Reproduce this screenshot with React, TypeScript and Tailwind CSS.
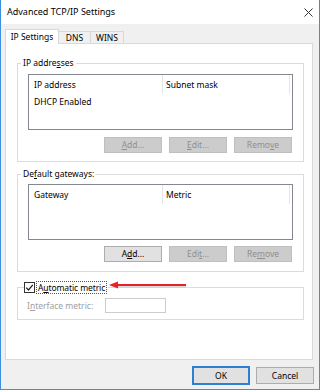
const disabledBtn =
  "flex h-[16px] w-[58px] items-center justify-center border border-[#bfbfbf] bg-[#cccccc] text-[#8f8f8f]";
const enabledBtn =
  "flex h-[16px] w-[58px] items-center justify-center border border-[#adadad] bg-[#e1e1e1] text-black";

function Key({ children }: { children: string }) {
  return <span className="underline underline-offset-[1px]">{children}</span>;
}

function ListBox({ first, second, rows }: { first: string; second: string; rows: string[] }) {
  return (
    <div className="h-[56px] w-[265px] border border-[#828790] bg-white">
      <div className="flex h-[19px] items-center">
        <div className="flex h-full w-[134px] items-center border-r border-[#e5e5e5] pl-[5px]">{first}</div>
        <div className="flex h-full w-[127px] items-center border-r border-[#e5e5e5] pl-[3px]">{second}</div>
      </div>
      {rows.map((row) => (
        <div key={row} className="flex h-[16px] items-center pl-[5px]">
          {row}
        </div>
      ))}
    </div>
  );
}

export default function App() {
  return (
    <div className="relative h-[390px] w-[320px] overflow-hidden border-x border-b border-[#3b8fe0] bg-[#f0f0f0] font-['Noto_Sans',sans-serif] text-[8.5px] leading-[12px] text-black">
      {/* title bar */}
      <div className="flex h-[24px] items-center justify-between bg-white pl-[6px] pr-[6px]">
        <span className="text-[9px]">Advanced TCP/IP Settings</span>
        <svg width="9" height="9" viewBox="0 0 9 9" className="mt-[1px]">
          <path d="M0.5 0.5 L8.5 8.5 M8.5 0.5 L0.5 8.5" stroke="#333" strokeWidth="1" />
        </svg>
      </div>

      {/* tabs */}
      <div className="relative z-10 mt-[5px] mb-[-1px] flex h-[15px] items-end pl-[4px]">
        <div className="flex h-[15px] w-[54px] items-center justify-center border-x border-t border-[#d9d9d9] bg-white">
          IP Settings
        </div>
        <div className="flex h-[13px] w-[32px] items-center justify-center border-t border-r border-b border-[#d9d9d9] bg-[#f0f0f0]">
          DNS
        </div>
        <div className="flex h-[13px] w-[33px] items-center justify-center border-t border-r border-b border-[#d9d9d9] bg-[#f0f0f0]">
          WINS
        </div>
      </div>

      {/* tab page */}
      <div className="ml-[4px] h-[317px] w-[308px] border border-[#d9d9d9] bg-white pt-[13px]">
        <fieldset className="ml-[11px] w-[287px] border border-[#dcdcdc] px-[10px] pt-[5px] pb-[8px]">
          <legend className="ml-[-7px] px-[2px]">
            IP addre<Key>s</Key>ses
          </legend>
          <ListBox first="IP address" second="Subnet mask" rows={["DHCP Enabled"]} />
          <div className="mt-[7px] flex justify-end gap-[7px] pr-[1px]">
            <div className={disabledBtn}>
              <Key>A</Key>dd...
            </div>
            <div className={disabledBtn}>
              <Key>E</Key>dit...
            </div>
            <div className={disabledBtn}>
              Remo<Key>v</Key>e
            </div>
          </div>
        </fieldset>

        <fieldset className="mt-[6px] ml-[11px] w-[287px] border border-[#dcdcdc] px-[10px] pt-[4px] pb-[9px]">
          <legend className="ml-[-7px] px-[2px]">
            De<Key>f</Key>ault gateways:
          </legend>
          <ListBox first="Gateway" second="Metric" rows={[]} />
          <div className="mt-[6px] flex justify-end gap-[7px] pr-[1px]">
            <div className={enabledBtn}>
              A<Key>d</Key>d...
            </div>
            <div className={disabledBtn}>
              Edi<Key>t</Key>...
            </div>
            <div className={disabledBtn}>
              Re<Key>m</Key>ove
            </div>
          </div>
        </fieldset>

        <fieldset className="relative mt-[8px] ml-[11px] w-[287px] border border-[#dcdcdc] pl-[9px] pt-[4px] pb-[6px]">
          <legend className="ml-[-3px] flex h-[14px] items-center gap-[1px] pr-[1px]">
            <span className="flex h-[11px] w-[11px] items-center justify-center border border-[#333333] bg-white">
              <svg width="9" height="9" viewBox="0 0 9 9">
                <path d="M1.2 4.6 L3.5 7 L7.8 1.8" stroke="#222" strokeWidth="1.2" fill="none" />
              </svg>
            </span>
            <span className="border border-dotted border-[#555] px-[1px] leading-[11px] tracking-[-0.1px]">
              A<Key>u</Key>tomatic metric
            </span>
          </legend>
          <div className="flex items-center">
            <span className="w-[78px] text-[#a0a0a0]">
              I<Key>n</Key>terface metric:
            </span>
            <div className="h-[15px] w-[61px] border border-[#cccccc] bg-white" />
          </div>
        </fieldset>
      </div>

      {/* red annotation arrow */}
      <svg className="absolute left-[107px] top-[280px]" width="82" height="10" viewBox="0 0 82 10">
        <path d="M9 6.2 L78 6.2" stroke="#000" strokeOpacity="0.15" strokeWidth="2" />
        <path d="M8 5 L78 5" stroke="#e8202a" strokeWidth="1.8" />
        <path d="M1 5 L10 1.5 L10 8.5 Z" fill="#e8202a" />
      </svg>

      {/* dialog buttons */}
      <div className="mt-[6px] flex items-start justify-end gap-[6px] pr-[5px]">
        <div className="flex h-[19px] w-[58px] items-center justify-center border-2 border-[#2b7fd4] bg-[#e1e1e1]">
          OK
        </div>
        <div className="mt-[1px] flex h-[17px] w-[58px] items-center justify-center border border-[#adadad] bg-[#e1e1e1]">
          Cancel
        </div>
      </div>
    </div>
  );
}
